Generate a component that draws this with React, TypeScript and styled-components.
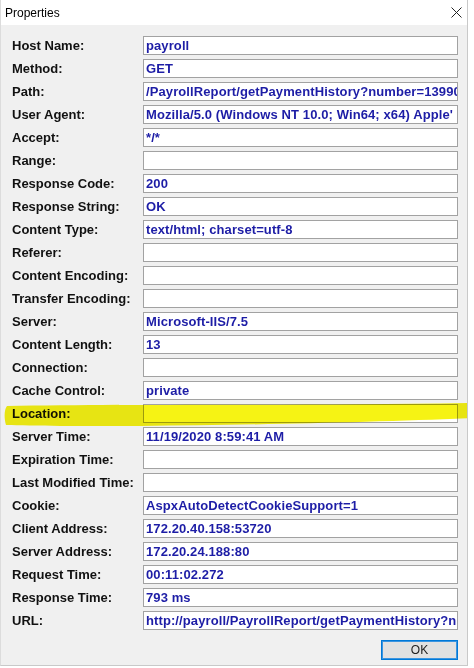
import React from 'react'
import styled, { createGlobalStyle } from 'styled-components'

const GlobalStyle = createGlobalStyle`
  html, body { margin: 0; padding: 0; background: #ffffff; }
  body { font-family: "Liberation Sans", Arial, sans-serif; }
`

const Window = styled.div`
  position: relative;
  width: 466px;
  height: 665px;
  background: #f0f0f0;
  border-right: 1px solid #c9c9c9;
  border-left: 1px solid #dcdcdc;
  border-bottom: 1px solid #c9c9c9;
  display: flex;
  flex-direction: column;
  overflow: hidden;
`

const TitleBar = styled.div`
  height: 25px;
  background: #ffffff;
  display: flex;
  align-items: center;
  justify-content: space-between;
  padding: 0 5px 0 4px;
  font-family: "Liberation Sans", Arial, sans-serif;
  font-size: 12px;
  color: #000;
`

const CloseGlyph = styled.svg`
  width: 11px;
  height: 11px;
`

const Body = styled.div`
  flex: 1;
  padding: 11px 9px 0 11px;
  display: flex;
  flex-direction: column;
`

const Grid = styled.div`
  display: grid;
  grid-template-columns: 131px 1fr;
  grid-auto-rows: 19px;
  row-gap: 4px;
`

const Label = styled.div`
  display: flex;
  align-items: center;
  font-weight: bold;
  font-size: 13px;
  color: #111;
  white-space: nowrap;
`

const Field = styled.div`
  box-sizing: border-box;
  height: 19px;
  background: #fff;
  border: 1px solid #a2a2a2;
  padding: 0 2px;
  display: flex;
  align-items: center;
  font-weight: bold;
  font-size: 13px;
  letter-spacing: 0.1px;
  color: #1d1da6;
  white-space: nowrap;
  overflow: hidden;
`

const Footer = styled.div`
  display: flex;
  justify-content: flex-end;
  margin-top: 10px;
`

const Button = styled.button`
  width: 77px;
  height: 20px;
  box-sizing: border-box;
  border: 1px solid #0078d7;
  box-shadow: inset 0 0 0 1px #3c95e0;
  background: #e1e1e1;
  font-family: "Liberation Sans", Arial, sans-serif;
  font-size: 12px;
  color: #222;
  padding: 0;
`

const Highlight = styled.svg`
  position: absolute;
  left: 0;
  top: 398px;
  width: 474px;
  height: 32px;
  pointer-events: none;
  mix-blend-mode: multiply;
`

const rows: [string, string][] = [
  ['Host Name:', 'payroll'],
  ['Method:', 'GET'],
  ['Path:', '/PayrollReport/getPaymentHistory?number=13990'],
  ['User Agent:', "Mozilla/5.0 (Windows NT 10.0; Win64; x64) Apple'"],
  ['Accept:', '*/*'],
  ['Range:', ''],
  ['Response Code:', '200'],
  ['Response String:', 'OK'],
  ['Content Type:', 'text/html; charset=utf-8'],
  ['Referer:', ''],
  ['Content Encoding:', ''],
  ['Transfer Encoding:', ''],
  ['Server:', 'Microsoft-IIS/7.5'],
  ['Content Length:', '13'],
  ['Connection:', ''],
  ['Cache Control:', 'private'],
  ['Location:', ''],
  ['Server Time:', '11/19/2020 8:59:41 AM'],
  ['Expiration Time:', ''],
  ['Last Modified Time:', ''],
  ['Cookie:', 'AspxAutoDetectCookieSupport=1'],
  ['Client Address:', '172.20.40.158:53720'],
  ['Server Address:', '172.20.24.188:80'],
  ['Request Time:', '00:11:02.272'],
  ['Response Time:', '793 ms'],
  ['URL:', 'http://payroll/PayrollReport/getPaymentHistory?nu'],
]

export default function App() {
  return (
    <>
      <GlobalStyle />
      <Window>
        <TitleBar>
          <span>Properties</span>
          <CloseGlyph viewBox="0 0 11 11">
            <path d="M0.5 0.5 L10.5 10.5 M10.5 0.5 L0.5 10.5" stroke="#222" strokeWidth="1" fill="none" />
          </CloseGlyph>
        </TitleBar>
        <Body>
          <Grid>
            {rows.map(([label, value]) => (
              <React.Fragment key={label}>
                <Label>{label}</Label>
                <Field>{value}</Field>
              </React.Fragment>
            ))}
          </Grid>
          <Footer>
            <Button>OK</Button>
          </Footer>
        </Body>
        <Highlight viewBox="0 0 474 32">
          <path
            d="M6 8 C 120 6, 300 8, 471 5 L 472 20 C 380 24, 250 27, 140 28 C 80 28, 30 28, 5 27 C 3 20, 3 12, 6 8 Z"
            fill="#f5f200"
            opacity="0.92"
          />
        </Highlight>
      </Window>
    </>
  )
}
